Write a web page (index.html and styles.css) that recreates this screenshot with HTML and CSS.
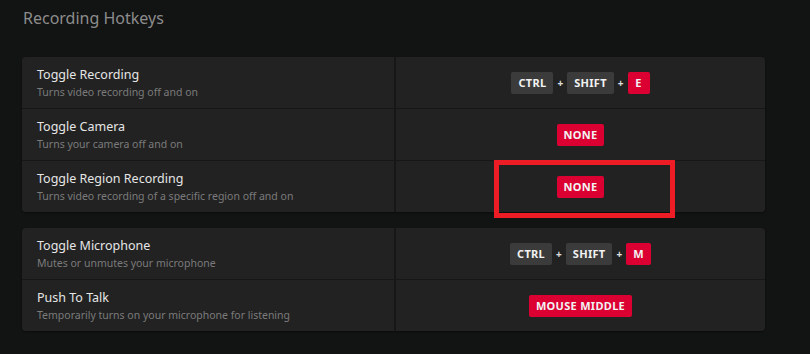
FILE: index.html
```html
<!DOCTYPE html>
<html>
<head>
<meta charset="utf-8">
<link rel="stylesheet" href="styles.css">
</head>
<body>
<div class="page">
  <h1 class="title">Recording Hotkeys</h1>
  <div class="card">
    <div class="row">
      <div class="info"><div class="name">Toggle Recording</div><div class="desc">Turns video recording off and on</div></div>
      <div class="keys"><span class="key">CTRL</span><span class="plus">+</span><span class="key">SHIFT</span><span class="plus">+</span><span class="key red">E</span></div>
    </div>
    <div class="row">
      <div class="info"><div class="name">Toggle Camera</div><div class="desc">Turns your camera off and on</div></div>
      <div class="keys"><span class="key red">NONE</span></div>
    </div>
    <div class="row">
      <div class="info"><div class="name">Toggle Region Recording</div><div class="desc">Turns video recording of a specific region off and on</div></div>
      <div class="keys"><span class="key red">NONE</span><span class="highlight"></span></div>
    </div>
  </div>
  <div class="card">
    <div class="row">
      <div class="info"><div class="name">Toggle Microphone</div><div class="desc">Mutes or unmutes your microphone</div></div>
      <div class="keys"><span class="key">CTRL</span><span class="plus">+</span><span class="key">SHIFT</span><span class="plus">+</span><span class="key red">M</span></div>
    </div>
    <div class="row">
      <div class="info"><div class="name">Push To Talk</div><div class="desc">Temporarily turns on your microphone for listening</div></div>
      <div class="keys"><span class="key red">MOUSE MIDDLE</span></div>
    </div>
  </div>
</div>
</body>
</html>
```
FILE: styles.css
```css
html, body {
  margin: 0;
  padding: 0;
  background: #121313;
  width: 810px;
  height: 354px;
  overflow: hidden;
  font-family: "Noto Sans", "Open Sans", sans-serif;
}
.page {
  padding: 6px 45px 0 22px;
  display: flex;
  flex-direction: column;
}
.title {
  margin: 0 0 0 1px;
  font-size: 16px;
  font-weight: 400;
  color: #8c8c8c;
  line-height: 24px;
  height: 51px;
}
.card {
  background: #171717;
  border-radius: 4px;
  display: flex;
  flex-direction: column;
  gap: 1px;
  margin-bottom: 16px;
  box-shadow: 0 1px 2px rgba(0,0,0,0.4);
}
.row {
  display: grid;
  grid-template-columns: 372px 1fr;
  column-gap: 2px;
  height: 51px;
}
.row:first-child .info { border-top-left-radius: 4px; }
.row:first-child .keys { border-top-right-radius: 4px; }
.row:last-child .info { border-bottom-left-radius: 4px; }
.row:last-child .keys { border-bottom-right-radius: 4px; }
.info {
  background: #222222;
  padding: 9px 0 0 15px;
  display: flex;
  flex-direction: column;
}
.name {
  color: #e6e6e6;
  font-size: 12.5px;
  line-height: 18px;
}
.desc {
  color: #7b7b7b;
  font-size: 10.5px;
  line-height: 16px;
}
.keys {
  background: #222222;
  display: flex;
  align-items: center;
  justify-content: center;
  position: relative;
}
.key {
  display: inline-flex;
  align-items: center;
  justify-content: center;
  height: 22px;
  padding: 0 7px;
  min-width: 8px;
  background: #3b3b3b;
  color: #f2f2f2;
  font-size: 11px;
  font-weight: 700;
  border-radius: 2px;
  letter-spacing: 0.3px;
}
.key.red {
  background: #dc0032;
}
.plus {
  color: #e0e0e0;
  font-size: 10px;
  font-weight: 700;
  margin: 0 4px;
}
.highlight {
  position: absolute;
  left: 98px;
  top: -1px;
  width: 171px;
  height: 48px;
  border: 5px solid #ee1c25;
}
```
